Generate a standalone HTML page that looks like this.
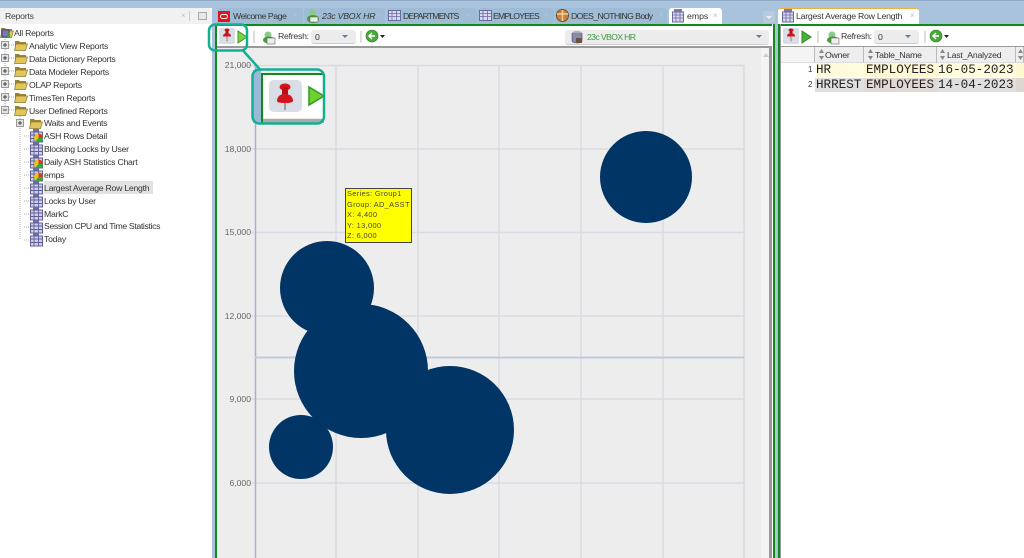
<!DOCTYPE html>
<html><head><meta charset="utf-8"><style>
html,body{margin:0;padding:0}
body{width:1024px;height:558px;overflow:hidden;position:relative;background:#fff;font-family:"Liberation Sans",sans-serif;font-size:8.7px;color:#333}
.a{position:absolute}
.t{position:absolute;white-space:nowrap;line-height:12px}
.l{letter-spacing:-.25px}
.tab{position:absolute;top:8px;height:16px;background:#9fbcd6;border-radius:3px 3px 0 0}
.tl{position:absolute;top:10px;white-space:nowrap;line-height:12px;color:#333}
.x{position:absolute;top:10px;color:#b5c3d0;font-size:8px;line-height:12px}
.y{position:absolute;left:222px;width:29px;text-align:right;color:#666;font-size:8.6px;line-height:10px}
.hd{position:absolute;top:47px;height:16px;background:#eee;border-right:1px solid #bbb;border-bottom:1px solid #ddd;line-height:16px;color:#333;white-space:nowrap;font-size:8.7px;box-sizing:border-box;letter-spacing:-.2px}
.c{position:absolute;font-family:"Liberation Mono",monospace;font-size:12.6px;line-height:14px;height:14px;color:#222;white-space:nowrap;overflow:hidden}
</style></head><body>
<div class="a" style="left:0;top:0;width:1024px;height:25px;background:#a9c3dc"></div>
<div class="a" style="left:0;top:0;width:1024px;height:1px;background:#8fa9c4"></div>

<!-- Left panel -->
<div class="a" style="left:0;top:8px;width:212px;height:550px;background:#fff"></div>
<div class="a" style="left:0;top:8px;width:212px;height:16px;background:#f1f1f1;border-radius:0 3px 0 0"></div>
<div class="t l" style="left:5px;top:10px;color:#444">Reports</div>
<div class="t" style="left:181px;top:10px;color:#bbb;font-size:8px">×</div>
<div class="a" style="left:189px;top:11px;width:1px;height:10px;background:#ccc"></div>
<div class="a" style="left:198px;top:12px;width:7px;height:6px;border:1px solid #aaa;background:#e8e8e8"></div>

<svg class="a" style="left:0;top:24px" width="212" height="240">
<defs>
<g id="f"><path d="M1 2h4l1 1h6v8H1z" fill="#9a8434"/><path d="M2 5h11.500l-2 6.500H0.500z" fill="#e3c65a" stroke="#8b7a33" stroke-width=".7"/></g>
<g id="p"><rect x=".5" y=".5" width="7" height="7" fill="#e4e4e4" stroke="#999"/><path d="M2 4h4M4 2v4" stroke="#444"/></g>
<g id="m"><rect x=".5" y=".5" width="7" height="7" fill="#e4e4e4" stroke="#999"/><path d="M2 4h4" stroke="#444"/></g>
<g id="g"><rect x="3" y="0" width="6" height="3" fill="#6c6ca6"/><rect x=".5" y="3" width="12" height="10" fill="#cfcfea" stroke="#5f5f98"/><path d="M0 6h13M0 9.500h13M4 3v10M8.500 3v10" stroke="#5f5f98" stroke-width=".9"/></g>
<g id="q"><use href="#g"/><circle cx="8.500" cy="9" r="4.500" fill="#e8c520"/><path d="M8.500 9V4.500A4.500 4.500 0 0 1 13 9z" fill="#d33"/><path d="M8.500 9H13A4.500 4.500 0 0 1 5.500 12.500z" fill="#3a3"/></g>
<g id="pin"><ellipse cx="0" cy="-5" rx="2.500" ry="1.500" fill="#d3141c"/><path d="M-1.500 -5h3v3.500h-3z" fill="#b81018"/><path d="M-4 1.500C-4 -1 -2 -2 0 -2S4 -1 4 1.500z" fill="#d3141c"/><path d="M0 1.500v5" stroke="#888" stroke-width="1"/></g>
</defs>
<path d="M5 13V92M9 21h6M9 34h6M9 47h6M9 60h6M9 73h6M9 86h6M20 92V216M24 112h7M24 125h7M24 138h7M24 151h7M24 164h7M24 177h7M24 190h7M24 203h7M24 216h7" stroke="#aaa" stroke-dasharray="1 1" fill="none"/>
<use href="#f" x="0" y="2"/><rect x="2" y="6" width="7" height="7" fill="#7a7ab0" stroke="#446"/><rect x="7" y="9" width="3" height="4" fill="#3a3"/>
<use href="#p" x="1" y="17"/><use href="#f" x="14" y="15"/>
<use href="#p" x="1" y="30"/><use href="#f" x="14" y="28"/>
<use href="#p" x="1" y="43"/><use href="#f" x="14" y="41"/>
<use href="#p" x="1" y="56"/><use href="#f" x="14" y="54"/>
<use href="#p" x="1" y="69"/><use href="#f" x="14" y="67"/>
<use href="#m" x="1" y="82"/><use href="#f" x="14" y="80"/>
<use href="#p" x="16" y="95"/><use href="#f" x="29" y="93"/>
<use href="#q" x="30" y="105"/><use href="#g" x="30" y="118"/><use href="#q" x="30" y="131"/><use href="#q" x="30" y="144"/>
<use href="#g" x="30" y="157"/><use href="#g" x="30" y="170"/><use href="#g" x="30" y="183"/><use href="#g" x="30" y="196"/><use href="#g" x="30" y="209"/>
</svg>
<div class="a" style="left:44px;top:181px;width:109px;height:13px;background:#e2e2e2"></div>
<div class="t l" style="left:14px;top:27px">All Reports</div>
<div class="t l" style="left:29px;top:40px">Analytic View Reports</div>
<div class="t l" style="left:29px;top:53px">Data Dictionary Reports</div>
<div class="t l" style="left:29px;top:66px">Data Modeler Reports</div>
<div class="t l" style="left:29px;top:79px">OLAP Reports</div>
<div class="t l" style="left:29px;top:92px">TimesTen Reports</div>
<div class="t l" style="left:29px;top:105px">User Defined Reports</div>
<div class="t l" style="left:44px;top:117px">Waits and Events</div>
<div class="t l" style="left:44px;top:130px">ASH Rows Detail</div>
<div class="t l" style="left:44px;top:143px">Blocking Locks by User</div>
<div class="t l" style="left:44px;top:156px">Daily ASH Statistics Chart</div>
<div class="t l" style="left:44px;top:169px">emps</div>
<div class="t l" style="left:44px;top:182px">Largest Average Row Length</div>
<div class="t l" style="left:44px;top:195px">Locks by User</div>
<div class="t l" style="left:44px;top:208px">MarkC</div>
<div class="t l" style="left:44px;top:220px;letter-spacing:-.35px">Session CPU and Time Statistics</div>
<div class="t l" style="left:44px;top:233px">Today</div>

<!-- Divider / frames -->
<div class="a" style="left:212px;top:8px;width:5px;height:550px;background:#a9c3dc"></div>
<div class="a" style="left:215px;top:24px;width:2px;height:534px;background:#118a1c"></div>
<div class="a" style="left:215px;top:24px;width:560px;height:2px;background:#118a1c"></div>
<div class="a" style="left:778px;top:24px;width:246px;height:2px;background:#118a1c"></div>

<!-- Tabs -->
<div class="tab" style="left:217px;width:86px"></div>
<div class="a" style="left:218px;top:11px;width:12px;height:11px;background:#e0141c"></div>
<div class="a" style="left:220px;top:14px;width:8px;height:5px;border:1px solid #fff;border-radius:3px;box-sizing:border-box"></div>
<div class="tl" style="left:233px;letter-spacing:-.45px">Welcome Page</div><div class="x" style="left:293px">×</div>

<div class="tab" style="left:304px;width:81px"></div>
<svg class="a" style="left:306px;top:9px" width="14" height="14"><ellipse cx="6" cy="4" rx="3.500" ry="3.500" fill="#8c8"/><ellipse cx="7" cy="10" rx="6" ry="4" fill="#4a9a3a"/><rect x="4" y="8" width="8" height="5" fill="#eee" stroke="#666" stroke-width=".6"/></svg>
<div class="tl" style="left:322px;font-style:italic;letter-spacing:-.2px">23c VBOX HR</div><div class="x" style="left:376px">×</div>

<div class="tab" style="left:387px;width:90px"></div>
<svg class="a" style="left:388px;top:10px" width="13" height="12"><rect x=".5" y=".5" width="12" height="10" fill="#d9d9ef" stroke="#6a6a9e"/><path d="M0 3.500h13M0 6.500h13M4 0v11M8.500 0v11" stroke="#6a6a9e" stroke-width=".8"/></svg>
<div class="tl" style="left:403px;letter-spacing:-.85px">DEPARTMENTS</div><div class="x" style="left:465px">×</div>

<div class="tab" style="left:478px;width:76px"></div>
<svg class="a" style="left:479px;top:10px" width="13" height="12"><rect x=".5" y=".5" width="12" height="10" fill="#d9d9ef" stroke="#6a6a9e"/><path d="M0 3.500h13M0 6.500h13M4 0v11M8.500 0v11" stroke="#6a6a9e" stroke-width=".8"/></svg>
<div class="tl" style="left:493px;letter-spacing:-.85px">EMPLOYEES</div><div class="x" style="left:544px">×</div>

<div class="tab" style="left:555px;width:112px"></div>
<svg class="a" style="left:556px;top:9px" width="13" height="13"><circle cx="6.500" cy="6.500" r="6" fill="#c9823c" stroke="#7a4a20"/><path d="M6.500 1v11M1 5h11" stroke="#f0d0a0" stroke-width="1.500"/></svg>
<div class="tl" style="left:571px;letter-spacing:-.6px">DOES_NOTHING Body</div><div class="x" style="left:659px">×</div>

<div class="a" style="left:669px;top:8px;width:53px;height:16px;background:#fff;border-radius:3px 3px 0 0"></div>
<svg class="a" style="left:672px;top:9px" width="12" height="14"><rect x="2" y="0" width="8" height="3" fill="#7c7cb0"/><rect x=".5" y="3" width="11" height="10" fill="#d9d9ef" stroke="#6a6a9e"/><path d="M0 6h12M0 9h12M4 3v10M8 3v10" stroke="#6a6a9e" stroke-width=".8"/></svg>
<div class="tl" style="left:687px">emps</div><div class="x" style="left:713px">×</div>

<div class="a" style="left:763px;top:11px;width:12px;height:12px;background:#b8cade;border-radius:2px"></div>
<div class="a" style="left:766px;top:16px;width:0;height:0;border:3px solid transparent;border-top:3px solid #eef"></div>

<div class="a" style="left:778px;top:8px;width:141px;height:16px;background:#fff;border-top:1px solid #f0b040;box-sizing:border-box;border-radius:3px 3px 0 0"></div>
<svg class="a" style="left:782px;top:9px" width="12" height="14"><rect x="2" y="0" width="8" height="3" fill="#7c7cb0"/><rect x=".5" y="3" width="11" height="10" fill="#d9d9ef" stroke="#6a6a9e"/><path d="M0 6h12M0 9h12M4 3v10M8 3v10" stroke="#6a6a9e" stroke-width=".8"/></svg>
<div class="tl" style="left:796px;letter-spacing:-.22px">Largest Average Row Length</div><div class="x" style="left:910px">×</div>

<!-- Center toolbar -->
<div class="a" style="left:217px;top:26px;width:556px;height:21px;background:#fff"></div>
<div class="a" style="left:217px;top:46px;width:556px;height:2px;background:#999"></div>
<svg class="a" style="left:217px;top:27px" width="440" height="20">
<rect x="2" y="1" width="16" height="16" rx="2" fill="#d9dde5"/>
<use href="#pin" x="10" y="8"/>
<path d="M21 4l9 6-9 6z" fill="#7ed040" stroke="#3d9a2a"/>
<path d="M37 4v12" stroke="#bbb"/>
<circle cx="51" cy="8" r="3.500" fill="#8c8"/><ellipse cx="52" cy="13" rx="6" ry="3.500" fill="#4a9a3a"/><rect x="50" y="11" width="8" height="6" fill="#eee" stroke="#666" stroke-width=".6"/>
<path d="M144 4v12" stroke="#bbb"/>
<circle cx="155" cy="9" r="6" fill="#48a838" stroke="#2f7a25" stroke-width=".6"/><path d="M158 9h-5M155 6l-3 3 3 3" stroke="#fff" stroke-width="1.500" fill="none"/>
<path d="M163 8h5l-2.500 3z" fill="#222"/>
</svg>
<div class="t l" style="left:278px;top:30px">Refresh:</div>
<div class="a" style="left:311px;top:30px;width:45px;height:14px;background:#ececec;border-radius:3px;border-bottom:1px solid #ccc;box-sizing:border-box"></div>
<div class="t" style="left:315px;top:31px">0</div>
<div class="a" style="left:342px;top:35px;width:0;height:0;border:3px solid transparent;border-top:3px solid #5a7fa8"></div>
<div class="a" style="left:565px;top:30px;width:204px;height:15px;background:#ececec;border-radius:3px;border-bottom:1px solid #ccc;box-sizing:border-box"></div>
<svg class="a" style="left:571px;top:30px" width="13" height="14"><ellipse cx="6" cy="3" rx="5" ry="2" fill="#aab"/><path d="M1 3v8c0 1 2 2 5 2s5-1 5-2V3" fill="#8888aa" stroke="#446" stroke-width=".6"/><rect x="5" y="8" width="6" height="5" fill="#654"/></svg>
<div class="t" style="left:587px;top:31px;color:#3e9a3e;letter-spacing:-.65px">23c VBOX HR</div>
<div class="a" style="left:756px;top:35px;width:0;height:0;border:3px solid transparent;border-top:3px solid #5a7fa8"></div>

<!-- Chart -->
<div class="a" style="left:217px;top:48px;width:544px;height:510px;background:#ededed"></div>
<div class="a" style="left:761px;top:48px;width:8px;height:510px;background:#f4f4f4"></div>
<div class="a" style="left:763px;top:50px;width:0;height:0;border:3px solid transparent;border-bottom:4px solid #ccc"></div>
<div class="a" style="left:769px;top:47px;width:3px;height:511px;background:#999"></div>
<div class="a" style="left:772px;top:24px;width:1px;height:534px;background:#fff"></div>
<div class="a" style="left:773px;top:24px;width:2px;height:534px;background:#118a1c"></div>
<div class="a" style="left:775px;top:8px;width:3px;height:550px;background:#a9c3dc"></div>
<div class="a" style="left:778px;top:24px;width:2px;height:534px;background:#118a1c"></div>
<div class="a" style="left:780px;top:24px;width:1px;height:534px;background:#999"></div>

<svg class="a" style="left:0;top:0" width="1024" height="558">
<g stroke="#d9dbe4" stroke-width="1.500" fill="none">
<path d="M336 65V558M418 65V558M499 65V558M581 65V558M663 65V558M744 65V558"/>
<path d="M240 65.500H744M250 149H744M250 232.500H744M250 316H744M250 399H744M250 483H744"/>
</g>
<path d="M255.500 65V558" stroke="#aab0c8" stroke-width="1.500"/>
<path d="M255 357.500H744" stroke="#c4cada" stroke-width="2"/>
<g fill="#003565">
<circle cx="646" cy="177" r="46"/>
<circle cx="327" cy="288" r="47"/>
<circle cx="361" cy="371" r="67"/>
<circle cx="450" cy="430" r="64"/>
<circle cx="301" cy="447" r="32"/>
</g>
</svg>
<div class="y" style="top:60px">21,000</div>
<div class="y" style="top:144px">18,000</div>
<div class="y" style="top:227px">15,000</div>
<div class="y" style="top:311px">12,000</div>
<div class="y" style="top:394px">9,000</div>
<div class="y" style="top:478px">6,000</div>

<!-- Tooltip -->
<div class="a" style="left:345px;top:188px;width:67px;height:55px;background:#ffff00;border:1px solid #444;box-sizing:border-box"></div>
<div class="t" style="left:347px;top:189px;font-size:7.4px;line-height:10.500px;color:#444;letter-spacing:.35px">Series: Group1<br>Group: AD_ASST<br>X: 4,400<br>Y: 13,000<br>Z: 6,000</div>

<!-- Right panel -->
<div class="a" style="left:781px;top:26px;width:243px;height:20px;background:#fff"></div>
<div class="a" style="left:781px;top:46px;width:243px;height:1px;background:#999"></div>
<svg class="a" style="left:781px;top:27px" width="180" height="20">
<rect x="2" y="1" width="16" height="16" rx="2" fill="#d9dde5"/>
<use href="#pin" x="10" y="8"/>
<path d="M21 4l9 6-9 6z" fill="#48b038" stroke="#2f8a25"/>
<path d="M37 4v12" stroke="#bbb"/>
<circle cx="51" cy="8" r="3.500" fill="#8c8"/><ellipse cx="52" cy="13" rx="6" ry="3.500" fill="#4a9a3a"/><rect x="50" y="11" width="8" height="6" fill="#eee" stroke="#666" stroke-width=".6"/>
<path d="M144 4v12" stroke="#bbb"/>
<circle cx="155" cy="9" r="6" fill="#48a838" stroke="#2f7a25" stroke-width=".6"/><path d="M158 9h-5M155 6l-3 3 3 3" stroke="#fff" stroke-width="1.500" fill="none"/>
<path d="M163 8h5l-2.500 3z" fill="#222"/>
</svg>
<div class="t l" style="left:841px;top:30px">Refresh:</div>
<div class="a" style="left:874px;top:30px;width:45px;height:14px;background:#ececec;border-radius:3px;border-bottom:1px solid #ccc;box-sizing:border-box"></div>
<div class="t" style="left:878px;top:31px">0</div>
<div class="a" style="left:905px;top:35px;width:0;height:0;border:3px solid transparent;border-top:3px solid #5a7fa8"></div>

<div class="hd" style="left:781px;width:34px;background:#f4f4f4"></div>
<div class="hd" style="left:815px;width:49px;padding-left:10px">Owner</div>
<div class="hd" style="left:864px;width:73px;padding-left:11px">Table_Name</div>
<div class="hd" style="left:937px;width:79px;padding-left:10px">Last_Analyzed</div>
<div class="hd" style="left:1016px;width:8px"></div>
<svg class="a" style="left:0;top:48px" width="1024" height="14"><g fill="#888"><path d="M819 5l2.500-4 2.500 4zM819 8l2.500 4 2.500-4zM868 5l2.500-4 2.500 4zM868 8l2.500 4 2.500-4zM940 5l2.500-4 2.500 4zM940 8l2.500 4 2.500-4zM1018 5l2.500-4 2.500 4zM1018 8l2.500 4 2.500-4z"/></g></svg>

<div class="a" style="left:815px;top:63px;width:209px;height:14px;background:#fffbdc"></div>
<div class="a" style="left:815px;top:78px;width:209px;height:14px;background:#dfdfdf"></div>
<div class="a" style="left:864px;top:78px;width:73px;height:14px;background:#e0d8d4"></div>
<div class="a" style="left:1016px;top:78px;width:8px;height:14px;background:#ded6d0"></div>
<div class="a" style="left:864px;top:63px;width:73px;height:14px;background:#fff6d2"></div>
<div class="a" style="left:1016px;top:63px;width:8px;height:14px;background:#fff6d2"></div>
<div class="t" style="left:808px;top:64px;font-size:8px">1</div>
<div class="t" style="left:808px;top:79px;font-size:8px">2</div>
<div class="c" style="left:816px;top:63px">HR</div>
<div class="c" style="left:866px;top:63px">EMPLOYEES</div>
<div class="c" style="left:938px;top:63px">16-05-2023</div>
<div class="c" style="left:816px;top:78px">HRREST</div>
<div class="c" style="left:866px;top:78px">EMPLOYEES</div>
<div class="c" style="left:938px;top:78px">14-04-2023</div>

<!-- Callouts -->
<div class="a" style="left:253px;top:70px;width:71px;height:53px;overflow:hidden;background:#fff">
 <div class="a" style="left:0;top:0;width:71px;height:3px;background:#ededed"></div>
 <div class="a" style="left:0;top:0;width:8px;height:53px;background:#9bb8d6"></div>
 <div class="a" style="left:8px;top:3px;width:2px;height:50px;background:#118a1c"></div>
 <div class="a" style="left:8px;top:3px;width:63px;height:2px;background:#118a1c"></div>
 <div class="a" style="left:16px;top:10px;width:33px;height:32px;background:#d9dde5;border-radius:5px"></div>
 <div class="a" style="left:10px;top:48px;width:61px;height:5px;background:#aaa;border-top:1px solid #e8e8e8;box-sizing:border-box"></div>
 <svg class="a" style="left:0;top:0" width="71" height="53">
  <ellipse cx="32" cy="17" rx="5.500" ry="3.500" fill="#d3141c"/>
  <path d="M29 17h6v8h-6z" fill="#b81018"/>
  <path d="M24 31C24 26 28 24 32 24S40 26 40 31C40 32 38 33 32 33S24 32 24 31z" fill="#d3141c"/>
  <path d="M32 33v7" stroke="#888" stroke-width="1.500"/>
  <path d="M56 17l15 9-15 9z" fill="#70d030" stroke="#2f9a25" stroke-width="1.500"/>
 </svg>
</div>
<svg class="a" style="left:0;top:0" width="340" height="135" fill="none" stroke="#12b093" stroke-width="2.500">
<rect x="209" y="24.500" width="38" height="26" rx="6" fill="none"/>
<rect x="252.500" y="69.500" width="71.500" height="54" rx="7"/>
<path d="M243 50.500L260 69.500"/>
</svg>
</body></html>
